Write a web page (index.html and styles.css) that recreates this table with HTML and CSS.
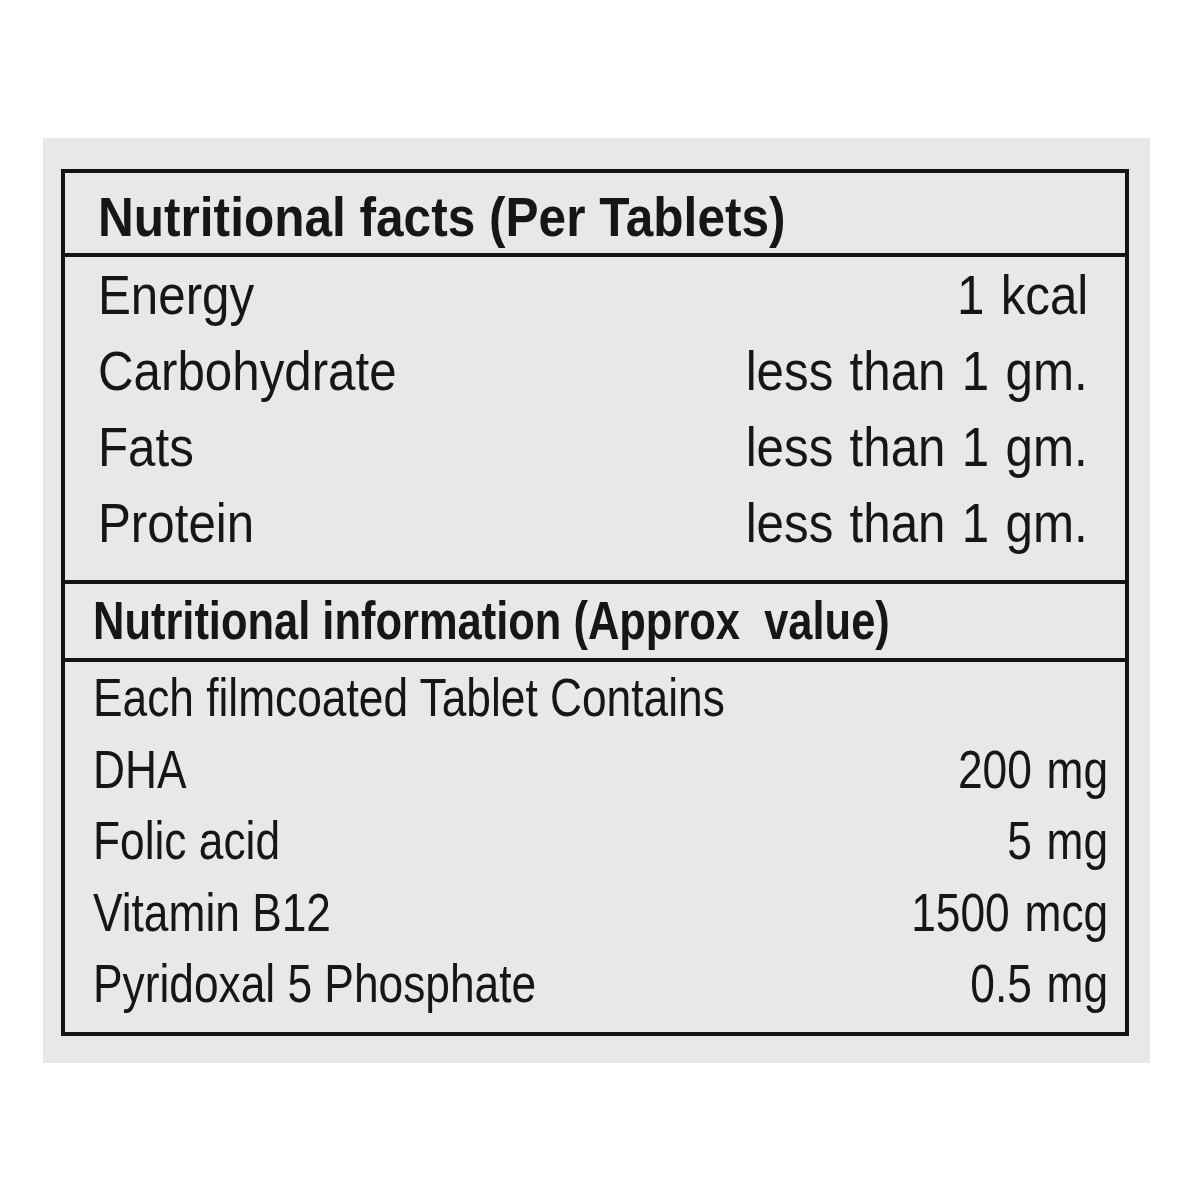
FILE: index.html
```html
<!DOCTYPE html>
<html lang="en">
<head>
<meta charset="utf-8">
<title>Nutritional facts</title>
<link rel="stylesheet" href="styles.css">
</head>
<body>
<div class="panel">
  <div class="label-box">
    <div class="head head-1"><span class="txt">Nutritional facts (Per Tablets)</span></div>
    <div class="section section-1">
      <div class="row"><span class="txt key">Energy</span><span class="txt val">1 kcal</span></div>
      <div class="row"><span class="txt key">Carbohydrate</span><span class="txt val">less than 1 gm.</span></div>
      <div class="row"><span class="txt key">Fats</span><span class="txt val">less than 1 gm.</span></div>
      <div class="row"><span class="txt key">Protein</span><span class="txt val">less than 1 gm.</span></div>
    </div>
    <div class="head head-2"><span class="txt">Nutritional information (Approx&nbsp; value)</span></div>
    <div class="section section-2">
      <div class="row"><span class="txt key">Each filmcoated Tablet Contains</span></div>
      <div class="row"><span class="txt key">DHA</span><span class="txt val">200 mg</span></div>
      <div class="row"><span class="txt key">Folic acid</span><span class="txt val">5 mg</span></div>
      <div class="row"><span class="txt key">Vitamin B12</span><span class="txt val">1500 mcg</span></div>
      <div class="row"><span class="txt key">Pyridoxal 5 Phosphate</span><span class="txt val">0.5 mg</span></div>
    </div>
  </div>
</div>
</body>
</html>
```

FILE: styles.css
```css
html, body {
  margin: 0;
  padding: 0;
  background: #ffffff;
}

body {
  font-family: "Liberation Sans", Arial, sans-serif;
  color: #161618;
}

.panel {
  box-sizing: border-box;
  margin: 138px 0 0 43px;
  width: 1107px;
  height: 925px;
  padding: 31px 21px 0 18px;
  background: #e8e8eb;
}

.label-box {
  border: 4px solid #141414;
}

.txt {
  display: inline-block;
  transform-origin: left center;
}

.val {
  transform-origin: right center;
  word-spacing: 3px;
}

.head {
  font-weight: bold;
  border-bottom: 4px solid #141414;
  white-space: nowrap;
}

.head-1 {
  font-size: 56px;
  line-height: 72px;
  padding: 8px 0 0 33px;
}

.head-1 .txt {
  transform: scaleX(0.885);
}

.head-2 {
  font-size: 53px;
  line-height: 74px;
  padding: 0 0 0 28px;
}

.head-2 .txt {
  transform: scaleX(0.82);
}

.section-1 {
  border-bottom: 4px solid #141414;
  padding: 0 37px 19px 33px;
  font-size: 56px;
}

.section-1 .row {
  height: 76px;
  line-height: 76px;
}

.section-1 .txt {
  transform: scaleX(0.88);
}

.section-2 {
  padding: 0 17px 12.5px 28px;
  font-size: 54px;
}

.section-2 .row {
  height: 71.5px;
  line-height: 71.5px;
}

.section-2 .txt {
  transform: scaleX(0.82);
}

.row {
  display: flex;
  justify-content: space-between;
  white-space: nowrap;
}
```
